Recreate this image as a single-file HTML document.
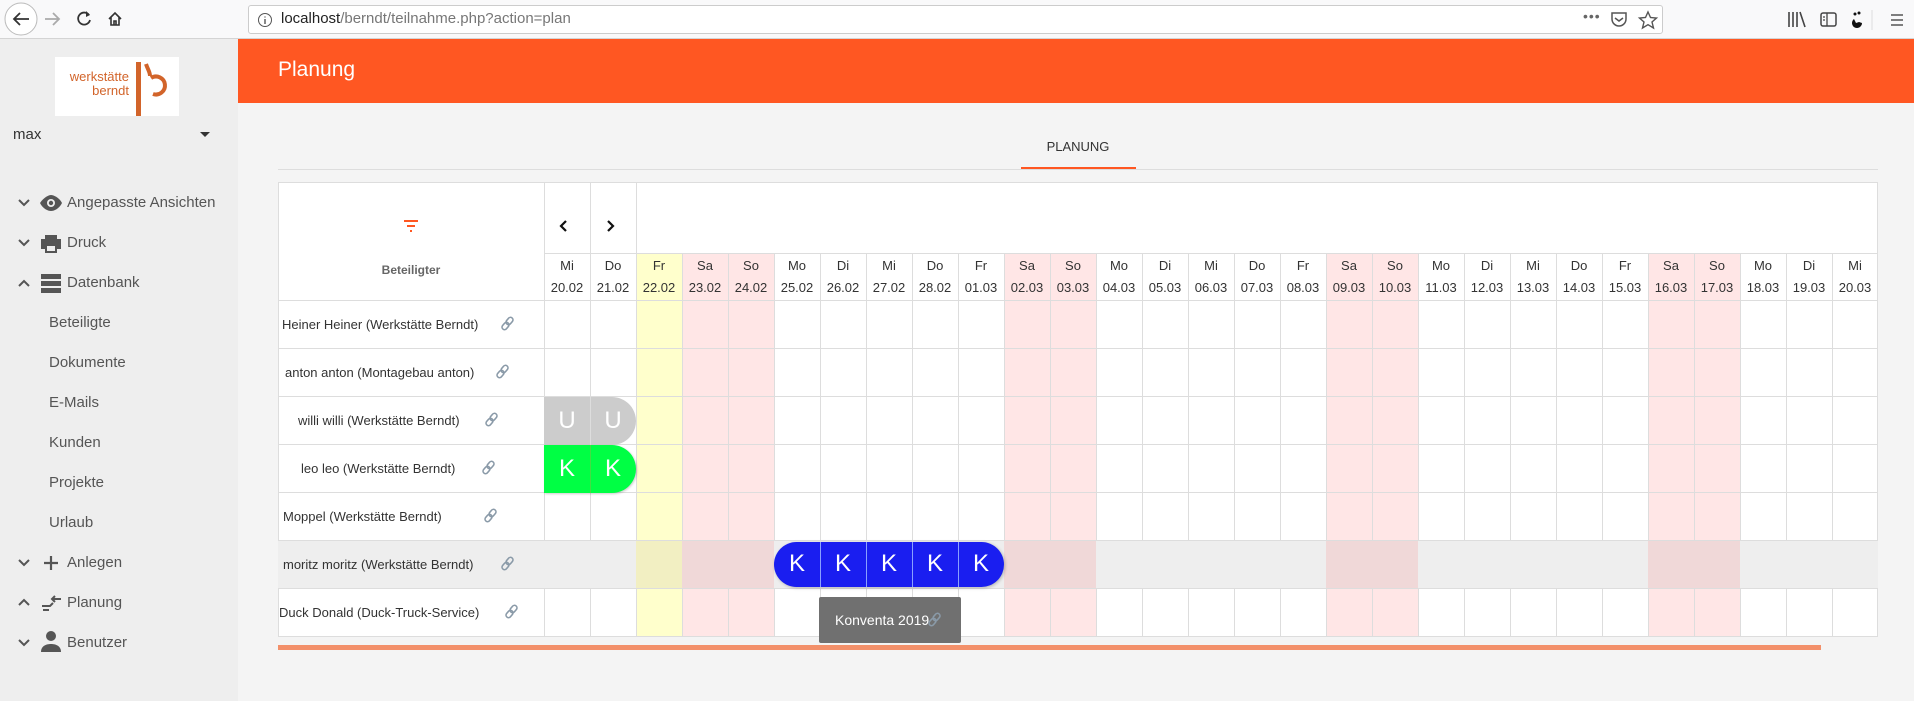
<!DOCTYPE html>
<html><head><meta charset="utf-8"><style>
*{box-sizing:border-box;margin:0;padding:0}
body{width:1914px;height:701px;position:relative;overflow:hidden;background:#f4f4f4;font-family:"Liberation Sans",sans-serif;color:#333}
.a{position:absolute}
.tb{left:0;top:0;width:1914px;height:39px;background:#f9f9fa;border-bottom:1px solid #d4d4d4}
.side{left:0;top:39px;width:238px;height:662px;background:#eee}
.hdr{left:238px;top:39px;width:1676px;height:64px;background:#ff5722}
.mi{font-size:15px;color:#555;line-height:20px}
.nm{font-size:13px;color:#333;line-height:16px}
.dh{font-size:13px;color:#333;text-align:center;width:46px;line-height:22px}
.ev{color:#fff;font-size:24px;text-align:center;line-height:48px;width:46px;height:48px}
</style></head><body>
<div class="a tb"></div>
<svg class="a" style="left:0;top:0" width="140" height="40">
<circle cx="21" cy="19" r="16" fill="#fff" stroke="#bbb"/>
<path d="M29 19H14M20 13l-6 6 6 6" fill="none" stroke="#333" stroke-width="1.8"/>
<path d="M59 19H45M53 13l6 6-6 6" fill="none" stroke="#aaa" stroke-width="1.8"/>
<path d="M89 15a6 6 0 1 0 1 5" fill="none" stroke="#333" stroke-width="1.8"/><path d="M86 11l4 4-4 2z" fill="#333"/>
<path d="M109 19l6-6 6 6M111 17v8h8v-8M114 25v-4h2v4" fill="none" stroke="#333" stroke-width="1.6"/>
</svg>
<div class="a" style="left:248px;top:5px;width:1415px;height:29px;background:#fff;border:1px solid #ccc;border-radius:3px"></div>
<svg class="a" style="left:257px;top:12px" width="16" height="16"><circle cx="8" cy="8" r="6.5" fill="none" stroke="#555"/><path d="M8 7v5M8 4.5v1" stroke="#555" stroke-width="1.4"/></svg>
<div class="a" style="left:281px;top:10px;font-size:15px;color:#222">localhost<span style="color:#777">/berndt/teilnahme.php?action=plan</span></div>
<div class="a" style="left:1583px;top:8px;font-size:14px;color:#666;letter-spacing:1px">•••</div>
<svg class="a" style="left:1610px;top:10px" width="60" height="20"><path d="M2 3h14v6a7 7 0 0 1-14 0z" fill="none" stroke="#555" stroke-width="1.5"/><path d="M5 8l4 3 4-3" fill="none" stroke="#555" stroke-width="1.5"/><path d="M38 2l2.5 5.5 6 .5-4.5 4 1.5 6-5.5-3.3-5.5 3.3 1.5-6-4.5-4 6-.5z" fill="none" stroke="#555" stroke-width="1.4"/></svg>
<svg class="a" style="left:1788px;top:10px" width="120" height="20"><path d="M1 2v15M5 2v15M9 2v15M12 2l5 15" stroke="#444" stroke-width="1.6"/><rect x="33" y="3" width="15" height="13" rx="2" fill="none" stroke="#444" stroke-width="1.5"/><path d="M39 3v13M35 7h2M35 10h2" stroke="#444" stroke-width="1.3"/><path d="M66 9a5 5 0 1 0 8 4l-3-1-3 1z" fill="#111"/><circle cx="67" cy="4" r="1.5" fill="#111"/><circle cx="71" cy="3" r="1.5" fill="#111"/><path d="M84 0v20" stroke="#ddd"/><path d="M103 5h12M103 10h12M103 15h12" stroke="#555" stroke-width="1.6"/></svg>

<div class="a side"></div>
<div class="a" style="left:55px;top:57px;width:124px;height:59px;background:#fff"></div>
<div class="a" style="left:65px;top:70px;font-size:13px;color:#d2642a;text-align:right;width:64px;line-height:14px">werkstätte<br>berndt</div>
<div class="a" style="left:136px;top:62px;width:5px;height:54px;background:#d2642a"></div>
<svg class="a" style="left:143px;top:62px" width="30" height="40"><path d="M3 2c2 6 4 8 4 12M8 16a9 9 0 1 1 2 16" fill="none" stroke="#d2642a" stroke-width="4"/></svg>
<div class="a mi" style="left:13px;top:125px;color:#333">max</div>
<svg class="a" style="left:199px;top:131px" width="12" height="8"><path d="M1 1h10L6 6z" fill="#333"/></svg>

<svg class="a" style="left:16px;top:190px" width="50" height="470" fill="#555">
<g fill="none" stroke="#555" stroke-width="2"><path d="M3 10l5 5 5-5"/><path d="M3 50l5 5 5-5"/><path d="M3 96l5-5 5 5"/><path d="M3 370l5 5 5-5"/><path d="M3 415l5-5 5 5"/><path d="M3 450l5 5 5-5"/><path d="M35 366v14M28 373h14" stroke-width="2.2"/><path d="M26 416h8l3-3M36 409h9M39 406l-3 3 3 3M27 420l6 0" stroke-width="2"/></g>
<path d="M24 13c4-6 9-8 11-8s8 2 11 8c-3 6-8 8-11 8s-8-2-11-8z"/><circle cx="35" cy="13" r="4" fill="#eee"/><circle cx="35" cy="13" r="2.2"/>
<path d="M29 45h12v4h4v10h-4v4H29v-4h-4V49h4z"/><rect x="31" y="56" width="8" height="5" fill="#eee"/>
<rect x="25" y="84" width="20" height="5"/><rect x="25" y="91" width="20" height="5"/><rect x="25" y="98" width="20" height="5"/>
<circle cx="35" cy="446" r="5"/><path d="M25 462c0-6 5-8 10-8s10 2 10 8z"/>
</svg>
<div class="a mi" style="left:67px;top:193px">Angepasste Ansichten</div>
<div class="a mi" style="left:67px;top:233px">Druck</div>
<div class="a mi" style="left:67px;top:273px">Datenbank</div>
<div class="a mi" style="left:49px;top:313px">Beteiligte</div>
<div class="a mi" style="left:49px;top:353px">Dokumente</div>
<div class="a mi" style="left:49px;top:393px">E-Mails</div>
<div class="a mi" style="left:49px;top:433px">Kunden</div>
<div class="a mi" style="left:49px;top:473px">Projekte</div>
<div class="a mi" style="left:49px;top:513px">Urlaub</div>
<div class="a mi" style="left:67px;top:553px">Anlegen</div>
<div class="a mi" style="left:67px;top:593px">Planung</div>
<div class="a mi" style="left:67px;top:633px">Benutzer</div>

<div class="a hdr"></div>
<div class="a" style="left:278px;top:58px;font-size:21px;color:#fff">Planung</div>
<div class="a" style="left:1040px;top:139px;font-size:13px;color:#333;width:76px;text-align:center">PLANUNG</div>
<div class="a" style="left:278px;top:169px;width:1600px;height:1px;background:#ddd"></div>
<div class="a" style="left:1021px;top:167px;width:115px;height:2px;background:#ff5722"></div>

<div class="a" style="left:278px;top:182px;width:1600px;height:455px;background:#fff;border:1px solid #ddd"></div>
<div class="a" style="left:636px;top:254px;width:46px;height:383px;background:#ffffcc"></div>
<div class="a" style="left:682px;top:254px;width:92px;height:383px;background:#ffe6e6"></div>
<div class="a" style="left:1004px;top:254px;width:92px;height:383px;background:#ffe6e6"></div>
<div class="a" style="left:1326px;top:254px;width:92px;height:383px;background:#ffe6e6"></div>
<div class="a" style="left:1648px;top:254px;width:92px;height:383px;background:#ffe6e6"></div>
<div class="a" style="left:544px;top:254px;width:1334px;height:383px;background:repeating-linear-gradient(to right,#ddd 0 1px,transparent 1px 46px)"></div>
<div class="a" style="left:278px;top:300px;width:1600px;height:337px;background:repeating-linear-gradient(to bottom,#ddd 0 1px,transparent 1px 48px)"></div>
<div class="a" style="left:544px;top:253px;width:1334px;height:1px;background:#ddd"></div>
<div class="a" style="left:544px;top:182px;width:1px;height:455px;background:#ddd"></div>
<div class="a" style="left:590px;top:182px;width:1px;height:72px;background:#ddd"></div>
<div class="a" style="left:636px;top:182px;width:1px;height:72px;background:#ddd"></div>
<div class="a" style="left:278px;top:541px;width:1600px;height:48px;background:#eee"></div>
<div class="a" style="left:636px;top:541px;width:46px;height:48px;background:#f2efc2"></div>
<div class="a" style="left:682px;top:541px;width:92px;height:48px;background:#f0d8d8"></div>
<div class="a" style="left:1004px;top:541px;width:92px;height:48px;background:#f0d8d8"></div>
<div class="a" style="left:1326px;top:541px;width:92px;height:48px;background:#f0d8d8"></div>
<div class="a" style="left:1648px;top:541px;width:92px;height:48px;background:#f0d8d8"></div>
<div class="a" style="left:278px;top:588px;width:1600px;height:1px;background:#ddd"></div>

<svg class="a" style="left:403px;top:219px" width="16" height="14"><path d="M1 2h14M4 7h8M7 12h2" stroke="#ff5722" stroke-width="2"/></svg>
<div class="a" style="left:371px;top:263px;width:80px;text-align:center;font-size:12px;font-weight:bold;color:#666">Beteiligter</div>
<svg class="a" style="left:558px;top:218px" width="80" height="16"><path d="M8 3L3 8l5 5" fill="none" stroke="#111" stroke-width="2.2"/><path d="M50 3l5 5-5 5" fill="none" stroke="#111" stroke-width="2.2"/></svg>

<div class="a" style="left:544px;top:255px;display:flex">
<div class="dh">Mi<br>20.02</div><div class="dh">Do<br>21.02</div><div class="dh">Fr<br>22.02</div><div class="dh">Sa<br>23.02</div><div class="dh">So<br>24.02</div><div class="dh">Mo<br>25.02</div><div class="dh">Di<br>26.02</div><div class="dh">Mi<br>27.02</div><div class="dh">Do<br>28.02</div><div class="dh">Fr<br>01.03</div><div class="dh">Sa<br>02.03</div><div class="dh">So<br>03.03</div><div class="dh">Mo<br>04.03</div><div class="dh">Di<br>05.03</div><div class="dh">Mi<br>06.03</div><div class="dh">Do<br>07.03</div><div class="dh">Fr<br>08.03</div><div class="dh">Sa<br>09.03</div><div class="dh">So<br>10.03</div><div class="dh">Mo<br>11.03</div><div class="dh">Di<br>12.03</div><div class="dh">Mi<br>13.03</div><div class="dh">Do<br>14.03</div><div class="dh">Fr<br>15.03</div><div class="dh">Sa<br>16.03</div><div class="dh">So<br>17.03</div><div class="dh">Mo<br>18.03</div><div class="dh">Di<br>19.03</div><div class="dh">Mi<br>20.03</div>
</div>

<div class="a nm" style="left:282px;top:317px">Heiner Heiner (Werkstätte Berndt)</div>
<div class="a nm" style="left:285px;top:365px">anton anton (Montagebau anton)</div>
<div class="a nm" style="left:298px;top:413px">willi willi (Werkstätte Berndt)</div>
<div class="a nm" style="left:301px;top:461px">leo leo (Werkstätte Berndt)</div>
<div class="a nm" style="left:283px;top:509px">Moppel (Werkstätte Berndt)</div>
<div class="a nm" style="left:283px;top:557px">moritz moritz (Werkstätte Berndt)</div>
<div class="a nm" style="left:279px;top:605px">Duck Donald (Duck-Truck-Service)</div>
<svg class="a" style="left:0;top:0" width="1914" height="701"><defs><g id="lk" fill="none" stroke="#8a9aa8" stroke-width="1.6"><rect x="5" y="-1" width="5" height="8" rx="2.5" transform="rotate(40 7.5 3)"/><rect x="1" y="4" width="5" height="8" rx="2.5" transform="rotate(40 3.5 8)"/></g></defs>
<use href="#lk" x="502" y="318"/><use href="#lk" x="497" y="366"/><use href="#lk" x="486" y="414"/><use href="#lk" x="483" y="462"/><use href="#lk" x="485" y="510"/><use href="#lk" x="502" y="558"/><use href="#lk" x="506" y="606"/></svg>

<div class="a" style="left:544px;top:397px;width:92px;height:48px;background:#ccc;border-radius:0 24px 24px 0"></div>
<div class="a" style="left:590px;top:397px;width:1px;height:48px;background:#ddd"></div>
<div class="a ev" style="left:544px;top:397px">U</div><div class="a ev" style="left:590px;top:397px">U</div>
<div class="a" style="left:544px;top:445px;width:92px;height:48px;background:#00ff44;border-radius:0 24px 24px 0;box-shadow:1px 1px 2px rgba(0,0,0,.2)"></div>
<div class="a" style="left:590px;top:445px;width:1px;height:48px;background:#4d4"></div>
<div class="a ev" style="left:544px;top:445px">K</div><div class="a ev" style="left:590px;top:445px">K</div>
<div class="a" style="left:774px;top:542px;width:230px;height:45px;background:#1a1ef0;border-radius:23px;box-shadow:1px 1px 3px rgba(0,0,0,.25)"></div>
<div class="a" style="left:820px;top:542px;width:1px;height:45px;background:#8aa0ff"></div>
<div class="a" style="left:866px;top:542px;width:1px;height:45px;background:#8aa0ff"></div>
<div class="a" style="left:912px;top:542px;width:1px;height:45px;background:#8aa0ff"></div>
<div class="a" style="left:958px;top:542px;width:1px;height:45px;background:#8aa0ff"></div>
<div class="a ev" style="left:774px;top:540px">K</div><div class="a ev" style="left:820px;top:540px">K</div><div class="a ev" style="left:866px;top:540px">K</div><div class="a ev" style="left:912px;top:540px">K</div><div class="a ev" style="left:958px;top:540px">K</div>
<div class="a" style="left:819px;top:597px;width:142px;height:46px;background:#707070;border-radius:2px"></div>
<div class="a" style="left:835px;top:612px;font-size:14px;color:#fff">Konventa 2019</div>
<svg class="a" style="left:0;top:0" width="1914" height="701"><use href="#lk" x="929" y="614"/></svg>

<div class="a" style="left:278px;top:645px;width:1543px;height:5px;background:#f3906a"></div>
</body></html>
